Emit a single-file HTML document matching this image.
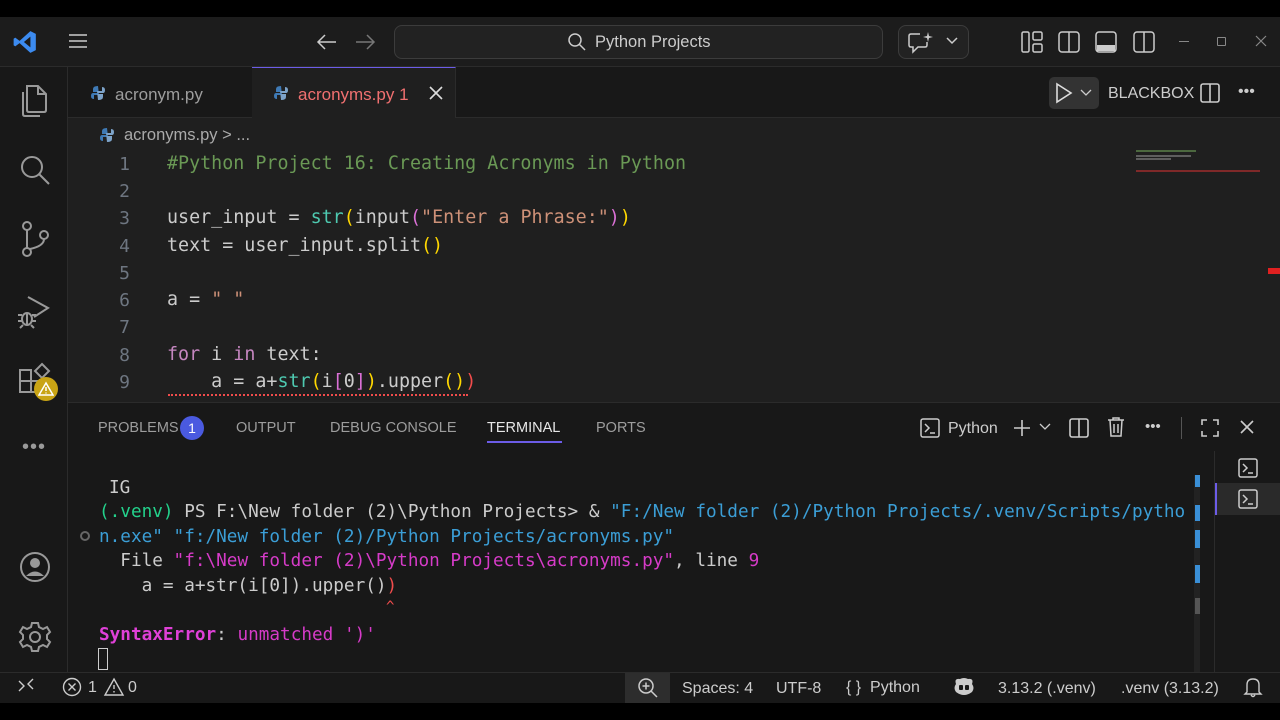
<!DOCTYPE html>
<html><head><meta charset="utf-8"><style>
*{margin:0;padding:0;box-sizing:border-box}
body{width:1280px;height:720px;background:#000;position:relative;overflow:hidden;font-family:"Liberation Sans",sans-serif;color:#ccc}
.abs{position:absolute}
.mono{font-family:"DejaVu Sans Mono","Liberation Mono",monospace}
#title{left:0;top:17px;width:1280px;height:50px;background:#1c1c1c;border-bottom:1px solid #2b2b2b}
#act{left:0;top:67px;width:68px;height:605px;background:#181818;border-right:1px solid #2b2b2b}
#tabs{left:68px;top:67px;width:1212px;height:51px;background:#181818}
#editor{left:68px;top:118px;width:1212px;height:284px;background:#1f1f1f}
#panel{left:68px;top:402px;width:1212px;height:270px;background:#181818;border-top:1px solid #2b2b2b}
#status{left:0;top:672px;width:1280px;height:31px;background:#181818;border-top:1px solid #2b2b2b;font-size:16px;color:#ccc}
.ln{position:absolute;left:100px;width:30px;text-align:right;color:#6e7681;font-size:18px}
.code{position:absolute;left:167px;font-size:18.35px;color:#ccc;white-space:pre}
.t{position:absolute;left:99px;font-size:17.7px;white-space:pre;color:#ccc}
svg{position:absolute}
</style></head><body>
<div id="title" class="abs"></div>
<svg style="left:12px;top:29px" width="26" height="26" viewBox="0 0 24 24"><path d="M17 2 L22 4.5 V19.5 L17 22 L7 13 L3 16 L1.5 15 V9 L3 8 L7 11 L17 2Z M17 7 L11 12 L17 17Z" fill="#3c8bf0" fill-rule="evenodd"/></svg>
<svg style="left:68px;top:32px" width="20" height="18" viewBox="0 0 20 18"><path d="M1 3H19M1 9H19M1 15H19" stroke="#ccc" stroke-width="1.5"/></svg>
<svg style="left:316px;top:33px" width="22" height="18" viewBox="0 0 22 18"><path d="M20 9H2M9 2L2 9L9 16" stroke="#ccc" stroke-width="1.5" fill="none"/></svg>
<svg style="left:354px;top:33px" width="22" height="18" viewBox="0 0 22 18"><path d="M2 9H20M13 2L20 9L13 16" stroke="#777" stroke-width="1.5" fill="none"/></svg>
<div class="abs" style="left:394px;top:25px;width:489px;height:34px;border:1px solid #3c3c3c;border-radius:8px;background:#222"></div>
<svg style="left:567px;top:32px" width="20" height="20" viewBox="0 0 20 20"><circle cx="8" cy="8" r="6" stroke="#ccc" stroke-width="1.5" fill="none"/><path d="M12.5 12.5L18 18" stroke="#ccc" stroke-width="1.5"/></svg>
<div class="abs" style="left:595px;top:33px;font-size:16.5px;color:#ccc">Python Projects</div>
<div class="abs" style="left:898px;top:25px;width:71px;height:34px;border:1px solid #3c3c3c;border-radius:8px;background:#222"></div>
<svg style="left:907px;top:30px" width="28" height="26" viewBox="0 0 28 26"><path d="M13 4H4Q2 4 2 6V15Q2 17 4 17H6V22L11 17H18Q20 17 20 15V12" stroke="#ccc" stroke-width="1.5" fill="none"/><path d="M21 2L22 6L26 7L22 8L21 12L20 8L16 7L20 6Z" fill="#ccc"/></svg>
<svg style="left:945px;top:36px" width="14" height="10" viewBox="0 0 14 10"><path d="M2 2L7 7L12 2" stroke="#ccc" stroke-width="1.5" fill="none"/></svg>
<svg style="left:1020px;top:30px" width="24" height="24" viewBox="0 0 24 24"><rect x="2" y="2" width="7" height="20" rx="1.5" stroke="#ccc" stroke-width="1.5" fill="none"/><rect x="13" y="2" width="9" height="8" rx="1.5" stroke="#ccc" stroke-width="1.5" fill="none"/><rect x="13" y="14" width="9" height="8" rx="1.5" stroke="#ccc" stroke-width="1.5" fill="none"/></svg>
<svg style="left:1057px;top:30px" width="24" height="24" viewBox="0 0 24 24"><rect x="2" y="2" width="20" height="20" rx="3" stroke="#ccc" stroke-width="1.5" fill="none"/><path d="M12 2V22" stroke="#ccc" stroke-width="1.5"/></svg>
<svg style="left:1094px;top:30px" width="24" height="24" viewBox="0 0 24 24"><rect x="2" y="2" width="20" height="20" rx="3" stroke="#ccc" stroke-width="1.5" fill="none"/><rect x="3" y="15" width="18" height="6" fill="#ccc"/></svg>
<svg style="left:1132px;top:30px" width="24" height="24" viewBox="0 0 24 24"><rect x="2" y="2" width="20" height="20" rx="3" stroke="#ccc" stroke-width="1.5" fill="none"/><path d="M12 2V22" stroke="#ccc" stroke-width="1.5"/></svg>
<div class="abs" style="left:1179px;top:41px;width:10px;height:1px;background:#888"></div>
<div class="abs" style="left:1217px;top:37px;width:9px;height:9px;border:1px solid #888;border-radius:1px"></div>
<svg style="left:1255px;top:35px" width="12" height="12" viewBox="0 0 12 12"><path d="M1 1L11 11M11 1L1 11" stroke="#888" stroke-width="1.2"/></svg>

<div id="act" class="abs"></div>
<svg style="left:18px;top:83px" width="32" height="36" viewBox="0 0 32 36"><path d="M9 3H20L28 11V27Q28 29 26 29H11Q9 29 9 27Z M20 3V11H28" stroke="#999" stroke-width="2" fill="none"/><path d="M5 9V31Q5 33 7 33H22" stroke="#999" stroke-width="2" fill="none"/></svg>
<svg style="left:18px;top:153px" width="34" height="34" viewBox="0 0 34 34"><circle cx="14" cy="14" r="10" stroke="#999" stroke-width="2" fill="none"/><path d="M21 21L31 31" stroke="#999" stroke-width="2"/></svg>
<svg style="left:18px;top:220px" width="32" height="40" viewBox="0 0 32 40"><circle cx="9" cy="6" r="4" stroke="#999" stroke-width="2" fill="none"/><circle cx="9" cy="32" r="4" stroke="#999" stroke-width="2" fill="none"/><circle cx="26" cy="15" r="4" stroke="#999" stroke-width="2" fill="none"/><path d="M9 10V28M26 19Q26 26 12 29" stroke="#999" stroke-width="2" fill="none"/></svg>
<svg style="left:16px;top:293px" width="36" height="36" viewBox="0 0 36 36"><path d="M12 4L32 15L18 24" stroke="#999" stroke-width="2" fill="none"/><ellipse cx="11" cy="26" rx="5" ry="6" stroke="#999" stroke-width="2" fill="none"/><path d="M2 22H6M2 28H6M16 22H20M16 28H20M11 20V32M7 32L4 35M15 32L18 35" stroke="#999" stroke-width="2"/></svg>
<svg style="left:17px;top:362px" width="36" height="36" viewBox="0 0 36 36"><rect x="3" y="8" width="11" height="11" stroke="#999" stroke-width="2" fill="none"/><rect x="3" y="19" width="11" height="11" stroke="#999" stroke-width="2" fill="none"/><rect x="14" y="19" width="11" height="11" stroke="#999" stroke-width="2" fill="none"/><path d="M25 2L32 9L25 16L18 9Z" stroke="#999" stroke-width="2" fill="none"/></svg>
<div class="abs" style="left:34px;top:377px;width:24px;height:24px;border-radius:12px;background:#c9a415"></div>
<svg style="left:38px;top:381px" width="16" height="16" viewBox="0 0 16 16"><path d="M8 2L15 14H1Z" stroke="#fff" stroke-width="1.5" fill="none"/><path d="M8 6V10M8 11.5V12.5" stroke="#fff" stroke-width="1.5"/></svg>
<div class="abs" style="left:22px;top:436px;font-size:20px;color:#999;letter-spacing:1px">•••</div>
<svg style="left:18px;top:550px" width="34" height="34" viewBox="0 0 34 34"><circle cx="17" cy="17" r="14" stroke="#999" stroke-width="2" fill="none"/><circle cx="17" cy="13" r="5" fill="#999"/><path d="M8 26Q17 17 26 26" fill="#999"/></svg>
<svg style="left:18px;top:620px" width="34" height="34" viewBox="0 0 34 34"><circle cx="17" cy="17" r="5" stroke="#999" stroke-width="2" fill="none"/><path d="M14 3H20L21 7L25 9L29 7L32 12L29 15V19L32 22L29 27L25 25L21 27L20 31H14L13 27L9 25L5 27L2 22L5 19V15L2 12L5 7L9 9L13 7Z" stroke="#999" stroke-width="2" fill="none"/></svg>

<div id="tabs" class="abs"></div>
<div class="abs" style="left:252px;top:67px;width:204px;height:51px;background:#1f1f1f;border-top:1px solid #6c5ce7;border-right:1px solid #2b2b2b"></div>
<div class="abs" style="left:68px;top:117px;width:184px;height:1px;background:#2b2b2b"></div>
<div class="abs" style="left:456px;top:117px;width:824px;height:1px;background:#2b2b2b"></div>
<svg style="left:90px;top:85px" width="16" height="16" viewBox="0 0 16 16"><path d="M8 1Q3 1 3 4V7H9V8H3Q1 8 1 11Q1 14 4 14V10H9Z" fill="#3f7ab5"/><path d="M8 15Q13 15 13 12V9H7V8H13Q15 8 15 5Q15 2 12 2V6H7Z" fill="#7da3c9"/></svg>
<div class="abs" style="left:115px;top:85px;font-size:17px;color:#9d9d9d">acronym.py</div>
<svg style="left:273px;top:85px" width="16" height="16" viewBox="0 0 16 16"><path d="M8 1Q3 1 3 4V7H9V8H3Q1 8 1 11Q1 14 4 14V10H9Z" fill="#3f7ab5"/><path d="M8 15Q13 15 13 12V9H7V8H13Q15 8 15 5Q15 2 12 2V6H7Z" fill="#7da3c9"/></svg>
<div class="abs" style="left:298px;top:85px;font-size:17px;color:#f07070">acronyms.py 1</div>
<svg style="left:428px;top:85px" width="16" height="16" viewBox="0 0 16 16"><path d="M2 2L14 14M14 2L2 14" stroke="#ddd" stroke-width="1.6"/></svg>
<div class="abs" style="left:1049px;top:77px;width:50px;height:32px;background:#333;border-radius:5px"></div>
<svg style="left:1054px;top:82px" width="20" height="22" viewBox="0 0 20 22"><path d="M3 2L17 11L3 20Z" stroke="#ddd" stroke-width="1.6" fill="none"/></svg>
<svg style="left:1080px;top:89px" width="12" height="8" viewBox="0 0 12 8"><path d="M1 1L6 6L11 1" stroke="#ccc" stroke-width="1.3" fill="none"/></svg>
<div class="abs" style="left:1108px;top:85px;font-size:16px;color:#ccc">BLACKBOX</div>
<svg style="left:1199px;top:82px" width="22" height="22" viewBox="0 0 22 22"><rect x="2" y="2" width="18" height="18" rx="2" stroke="#ccc" stroke-width="1.6" fill="none"/><path d="M11 2V20" stroke="#ccc" stroke-width="1.6"/></svg>
<div class="abs" style="left:1238px;top:83px;font-size:16px;color:#ccc">•••</div>

<div id="editor" class="abs"></div>
<svg style="left:99px;top:127px" width="16" height="16" viewBox="0 0 16 16"><path d="M8 1Q3 1 3 4V7H9V8H3Q1 8 1 11Q1 14 4 14V10H9Z" fill="#3f7ab5"/><path d="M8 15Q13 15 13 12V9H7V8H13Q15 8 15 5Q15 2 12 2V6H7Z" fill="#7da3c9"/></svg>
<div class="abs" style="left:124px;top:126px;font-size:16.5px;color:#aaa">acronyms.py &gt; ...</div>

<div class="ln mono" style="top:154px">1</div>
<div class="ln mono" style="top:181px">2</div>
<div class="ln mono" style="top:208px">3</div>
<div class="ln mono" style="top:236px">4</div>
<div class="ln mono" style="top:263px">5</div>
<div class="ln mono" style="top:290px">6</div>
<div class="ln mono" style="top:317px">7</div>
<div class="ln mono" style="top:345px">8</div>
<div class="ln mono" style="top:372px">9</div>
<div class="code mono" style="top:153px;color:#6a9955">#Python Project 16: Creating Acronyms in Python</div>
<div class="code mono" style="top:207px">user_input = <span style="color:#4ec9b0">str</span><span style="color:#ffd700">(</span>input<span style="color:#da70d6">(</span><span style="color:#ce9178">"Enter a Phrase:"</span><span style="color:#da70d6">)</span><span style="color:#ffd700">)</span></div>
<div class="code mono" style="top:235px">text = user_input.split<span style="color:#ffd700">()</span></div>
<div class="code mono" style="top:289px">a = <span style="color:#ce9178">" "</span></div>
<div class="code mono" style="top:344px"><span style="color:#c586c0">for</span> i <span style="color:#c586c0">in</span> text:</div>
<div class="code mono" style="top:371px">    a = a+<span style="color:#4ec9b0">str</span><span style="color:#ffd700">(</span>i<span style="color:#da70d6">[</span>0<span style="color:#da70d6">]</span><span style="color:#ffd700">)</span>.upper<span style="color:#ffd700">()</span><span style="color:#f14c4c">)</span></div>
<div class="abs" style="left:168px;top:393px;width:300px;height:3px;border-bottom:2px dotted #f14c4c"></div>
<div class="abs" style="left:1136px;top:150px;width:124px;height:25px;opacity:.6">
<div style="height:2px;width:60px;background:#6a9955;margin-top:0"></div>
<div style="height:2px;width:55px;background:#888;margin-top:3px"></div>
<div style="height:2px;width:35px;background:#888;margin-top:1px"></div>
<div style="height:2px;width:124px;background:#c03030;margin-top:10px"></div>
</div>
<div class="abs" style="left:1268px;top:268px;width:12px;height:6px;background:#e02020"></div>

<div id="panel" class="abs"></div>
<div class="abs" style="left:98px;top:420px;font-size:14.5px;color:#9d9d9d">PROBLEMS</div>
<div class="abs" style="left:180px;top:416px;width:24px;height:24px;border-radius:12px;background:#4a5ae0;color:#fff;font-size:14px;text-align:center;line-height:24px">1</div>
<div class="abs" style="left:236px;top:420px;font-size:14.5px;color:#9d9d9d">OUTPUT</div>
<div class="abs" style="left:330px;top:420px;font-size:14.5px;color:#9d9d9d">DEBUG CONSOLE</div>
<div class="abs" style="left:487px;top:420px;font-size:14.5px;color:#e7e7e7">TERMINAL</div>
<div class="abs" style="left:487px;top:441px;width:75px;height:2px;background:#6c5ce7"></div>
<div class="abs" style="left:596px;top:420px;font-size:14.5px;color:#9d9d9d">PORTS</div>
<svg style="left:919px;top:417px" width="22" height="22" viewBox="0 0 22 22"><rect x="2" y="2" width="18" height="18" rx="2" stroke="#ccc" stroke-width="1.5" fill="none"/><path d="M6 7L10 11L6 15M11 16H16" stroke="#ccc" stroke-width="1.5" fill="none"/></svg>
<div class="abs" style="left:948px;top:420px;font-size:16px;color:#ccc">Python</div>
<svg style="left:1012px;top:418px" width="20" height="20" viewBox="0 0 20 20"><path d="M10 2V18M2 10H18" stroke="#ccc" stroke-width="1.6"/></svg>
<svg style="left:1039px;top:423px" width="12" height="8" viewBox="0 0 12 8"><path d="M1 1L6 6L11 1" stroke="#ccc" stroke-width="1.3" fill="none"/></svg>
<svg style="left:1068px;top:417px" width="22" height="22" viewBox="0 0 22 22"><rect x="2" y="2" width="18" height="18" rx="2" stroke="#ccc" stroke-width="1.6" fill="none"/><path d="M11 2V20" stroke="#ccc" stroke-width="1.6"/></svg>
<svg style="left:1106px;top:416px" width="20" height="22" viewBox="0 0 20 22"><path d="M2 4H18M7 4V2H13V4M4 4L5 20H15L16 4M8 8V17M12 8V17" stroke="#ccc" stroke-width="1.5" fill="none"/></svg>
<div class="abs" style="left:1145px;top:418px;font-size:15px;color:#ccc">•••</div>
<div class="abs" style="left:1181px;top:417px;width:1px;height:22px;background:#555"></div>
<svg style="left:1200px;top:418px" width="20" height="20" viewBox="0 0 20 20"><path d="M2 7V2H7M13 2H18V7M18 13V18H13M7 18H2V13" stroke="#ccc" stroke-width="1.6" fill="none"/></svg>
<svg style="left:1239px;top:419px" width="16" height="16" viewBox="0 0 16 16"><path d="M2 2L14 14M14 2L2 14" stroke="#ccc" stroke-width="1.6"/></svg>
<div class="abs" style="left:1214px;top:451px;width:1px;height:221px;background:#2b2b2b"></div>
<div class="abs" style="left:1215px;top:483px;width:65px;height:32px;background:#2a2a2a;border-left:2px solid #6c5ce7"></div>
<svg style="left:1237px;top:457px" width="22" height="22" viewBox="0 0 22 22"><rect x="2" y="2" width="18" height="18" rx="2" stroke="#ccc" stroke-width="1.5" fill="none"/><path d="M6 7L10 11L6 15M11 16H16" stroke="#ccc" stroke-width="1.5" fill="none"/></svg>
<svg style="left:1237px;top:488px" width="22" height="22" viewBox="0 0 22 22"><rect x="2" y="2" width="18" height="18" rx="2" stroke="#ccc" stroke-width="1.5" fill="none"/><path d="M6 7L10 11L6 15M11 16H16" stroke="#ccc" stroke-width="1.5" fill="none"/></svg>
<div class="abs" style="left:1194px;top:475px;width:6px;height:197px;background:#222"></div>
<div class="abs" style="left:1195px;top:475px;width:5px;height:12px;background:#3a8fd6"></div>
<div class="abs" style="left:1195px;top:505px;width:5px;height:16px;background:#3a8fd6"></div>
<div class="abs" style="left:1195px;top:530px;width:5px;height:18px;background:#3a8fd6"></div>
<div class="abs" style="left:1195px;top:565px;width:5px;height:18px;background:#3a8fd6"></div>
<div class="abs" style="left:1195px;top:598px;width:5px;height:16px;background:#555"></div>

<div class="t mono" style="top:478px;left:109px">IG</div>
<div class="t mono" style="top:502px"><span style="color:#23d18b">(.venv)</span> PS F:\New folder (2)\Python Projects&gt; &amp; <span style="color:#3b9ed6">"F:/New folder (2)/Python Projects/.venv/Scripts/pytho</span></div>
<div class="abs" style="left:80px;top:531px;width:10px;height:10px;border:2px solid #666;border-radius:50%"></div>
<div class="t mono" style="top:527px;color:#3b9ed6">n.exe" "f:/New folder (2)/Python Projects/acronyms.py"</div>
<div class="t mono" style="top:551px">  File <span style="color:#d63bc8">"f:\New folder (2)\Python Projects\acronyms.py"</span>, line <span style="color:#d63bc8">9</span></div>
<div class="t mono" style="top:576px">    a = a+str(i[0]).upper()<span style="color:#f14c4c">)</span></div>
<div class="t mono" style="top:599px;left:386px;color:#f14c4c;font-size:14px">^</div>
<div class="t mono" style="top:625px"><b style="color:#e040d8">SyntaxError</b>: <span style="color:#d63bc8">unmatched ')'</span></div>
<div class="abs" style="left:98px;top:648px;width:10px;height:22px;border:1.5px solid #ccc"></div>

<div id="status" class="abs"></div>
<svg style="left:16px;top:677px" width="20" height="20" viewBox="0 0 20 20"><path d="M3 4L8 9L3 14M17 2L12 7L17 12" stroke="#ccc" stroke-width="1.4" fill="none"/></svg>
<svg style="left:62px;top:677px" width="20" height="20" viewBox="0 0 20 20"><circle cx="10" cy="10" r="8.5" stroke="#ccc" stroke-width="1.4" fill="none"/><path d="M6.5 6.5L13.5 13.5M13.5 6.5L6.5 13.5" stroke="#ccc" stroke-width="1.4"/></svg>
<div class="abs" style="left:88px;top:679px;font-size:16px">1</div>
<svg style="left:103px;top:677px" width="22" height="20" viewBox="0 0 22 20"><path d="M11 2L20 18H2Z" stroke="#ccc" stroke-width="1.4" fill="none"/><path d="M11 8V12M11 14V15.5" stroke="#ccc" stroke-width="1.4"/></svg>
<div class="abs" style="left:128px;top:679px;font-size:16px">0</div>
<div class="abs" style="left:625px;top:673px;width:45px;height:30px;background:#2d2d2d"></div>
<svg style="left:637px;top:677px" width="22" height="22" viewBox="0 0 22 22"><circle cx="9" cy="9" r="7" stroke="#ccc" stroke-width="1.5" fill="none"/><path d="M14 14L20 20M9 5.5V12.5M5.5 9H12.5" stroke="#ccc" stroke-width="1.5"/></svg>
<div class="abs" style="left:682px;top:680px;font-size:16px">Spaces: 4</div>
<div class="abs" style="left:776px;top:680px;font-size:16px">UTF-8</div>
<div class="abs" style="left:846px;top:679px;font-size:16px">{ }&nbsp; Python</div>
<svg style="left:952px;top:676px" width="24" height="22" viewBox="0 0 24 22"><path d="M4 8Q2 2 8 3Q12 1 16 3Q22 2 20 8Q23 12 20 16Q12 22 4 16Q1 12 4 8Z" fill="#ccc"/><rect x="7" y="9" width="4" height="5" rx="1" fill="#181818"/><rect x="13" y="9" width="4" height="5" rx="1" fill="#181818"/></svg>
<div class="abs" style="left:998px;top:680px;font-size:16px">3.13.2 (.venv)</div>
<div class="abs" style="left:1121px;top:680px;font-size:16px">.venv (3.13.2)</div>
<svg style="left:1243px;top:676px" width="20" height="22" viewBox="0 0 20 22"><path d="M4 16V9Q4 3 10 3Q16 3 16 9V16L18 18H2Z M8 19Q10 22 12 19" stroke="#ccc" stroke-width="1.4" fill="none"/></svg>
</body></html>
